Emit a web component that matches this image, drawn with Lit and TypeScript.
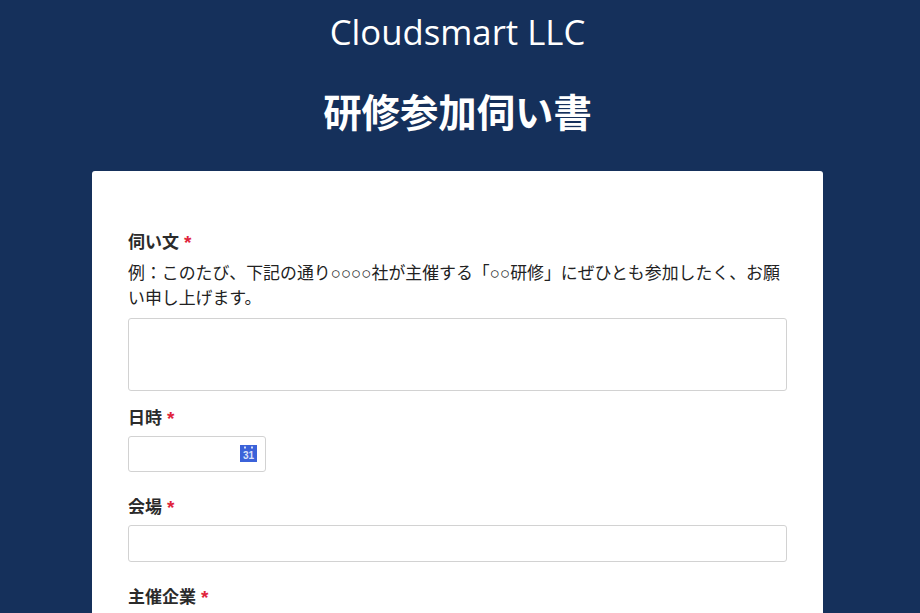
import { LitElement, html, css } from "lit";
import { customElement } from "lit/decorators.js";

@customElement("app-root")
export class AppRoot extends LitElement {
  static styles = css`
    :host {
      display: block;
      height: 613px;
      overflow: hidden;
      background: #15305b;
      font-family: "Liberation Sans", "Noto Sans CJK JP", sans-serif;
      color: #222;
    }
    .page {
      width: 915px;
      display: flex;
      flex-direction: column;
      align-items: center;
    }
    .brand {
      margin: 10px 0 0;
      height: 44px;
      line-height: 44px;
      font-family: "Open Sans", "Noto Sans", sans-serif;
      font-size: 34.7px;
      font-weight: 500;
      color: #fff;
    }
    h1 {
      margin: 32px 0 0;
      height: 56px;
      line-height: 56px;
      font-size: 38.4px;
      font-weight: 700;
      color: #fff;
    }
    .card {
      margin-top: 29px;
      width: 731px;
      box-sizing: border-box;
      background: #fff;
      border-radius: 3px;
      padding: 59px 36px 40px;
    }
    .label {
      font-size: 17px;
      font-weight: 700;
      line-height: 25.5px;
      color: #2b2b2b;
      display: flex;
      gap: 5px;
    }
    .req {
      color: #e0243c;
      font-size: 19px;
      font-weight: 700;
      line-height: 25.5px;
    }
    .desc {
      margin-top: 5px;
      font-size: 16.9px;
      line-height: 25.5px;
      color: #222;
    }
    .control {
      box-sizing: border-box;
      border: 1px solid #d2d2d2;
      border-radius: 3px;
      background: #fff;
    }
    .textarea {
      margin-top: 6.5px;
      height: 73px;
    }
    .input {
      margin-top: 5px;
      height: 37px;
    }
    .date {
      margin-top: 4px;
      width: 138px;
      height: 36px;
      display: flex;
      align-items: center;
      justify-content: flex-end;
      padding-right: 8px;
    }
    .date svg {
      display: block;
    }
    .field {
      margin-top: 15px;
    }
    .field.next {
      margin-top: 23px;
    }
  `;

  render() {
    return html`
      <div class="page">
        <div class="brand">Cloudsmart LLC</div>
        <h1>研修参加伺い書</h1>
        <div class="card">
          <div class="label"><span>伺い文</span><span class="req">*</span></div>
          <div class="desc">例：このたび、下記の通り○○○○社が主催する「○○研修」にぜひとも参加したく、お願い申し上げます。</div>
          <div class="control textarea"></div>
          <div class="field">
            <div class="label"><span>日時</span><span class="req">*</span></div>
            <div class="control date">
              <svg width="17" height="17" viewBox="0 0 17 17">
                <rect width="17" height="17" fill="#3b62d9"></rect>
                <rect x="4" y="1.5" width="2" height="2" fill="#d5def8"></rect>
                <rect x="11" y="1.5" width="2" height="2" fill="#d5def8"></rect>
                <text x="8.5" y="14" text-anchor="middle" font-size="10" font-weight="700" fill="#dbe3fa" font-family="Liberation Sans, sans-serif">31</text>
              </svg>
            </div>
          </div>
          <div class="field next">
            <div class="label"><span>会場</span><span class="req">*</span></div>
            <div class="control input"></div>
          </div>
          <div class="field next">
            <div class="label"><span>主催企業</span><span class="req">*</span></div>
            <div class="control input"></div>
          </div>
        </div>
      </div>
    `;
  }
}
